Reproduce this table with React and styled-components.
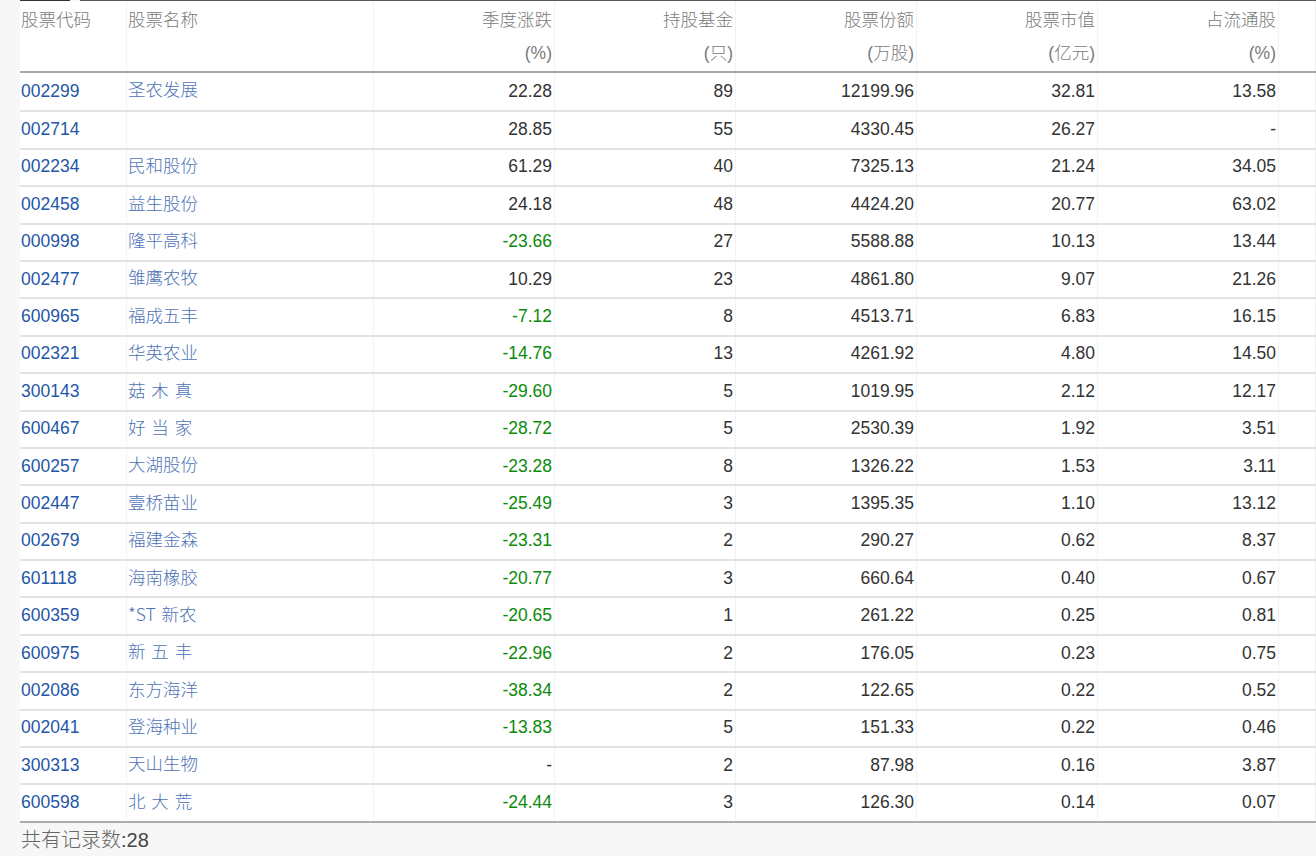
import React from "react";
import styled, { createGlobalStyle } from "styled-components";

const rows = [
  ["002299", "圣农发展", "22.28", "89", "12199.96", "32.81", "13.58"],
  ["002714", "", "28.85", "55", "4330.45", "26.27", "-"],
  ["002234", "民和股份", "61.29", "40", "7325.13", "21.24", "34.05"],
  ["002458", "益生股份", "24.18", "48", "4424.20", "20.77", "63.02"],
  ["000998", "隆平高科", "-23.66", "27", "5588.88", "10.13", "13.44"],
  ["002477", "雏鹰农牧", "10.29", "23", "4861.80", "9.07", "21.26"],
  ["600965", "福成五丰", "-7.12", "8", "4513.71", "6.83", "16.15"],
  ["002321", "华英农业", "-14.76", "13", "4261.92", "4.80", "14.50"],
  ["300143", "菇 木 真", "-29.60", "5", "1019.95", "2.12", "12.17"],
  ["600467", "好 当 家", "-28.72", "5", "2530.39", "1.92", "3.51"],
  ["600257", "大湖股份", "-23.28", "8", "1326.22", "1.53", "3.11"],
  ["002447", "壹桥苗业", "-25.49", "3", "1395.35", "1.10", "13.12"],
  ["002679", "福建金森", "-23.31", "2", "290.27", "0.62", "8.37"],
  ["601118", "海南橡胶", "-20.77", "3", "660.64", "0.40", "0.67"],
  ["600359", "*ST 新农", "-20.65", "1", "261.22", "0.25", "0.81"],
  ["600975", "新 五 丰", "-22.96", "2", "176.05", "0.23", "0.75"],
  ["002086", "东方海洋", "-38.34", "2", "122.65", "0.22", "0.52"],
  ["002041", "登海种业", "-13.83", "5", "151.33", "0.22", "0.46"],
  ["300313", "天山生物", "-", "2", "87.98", "0.16", "3.87"],
  ["600598", "北 大 荒", "-24.44", "3", "126.30", "0.14", "0.07"],
];

const headers = [
  ["股票代码", ""],
  ["股票名称", ""],
  ["季度涨跌", "(%)"],
  ["持股基金", "(只)"],
  ["股票份额", "(万股)"],
  ["股票市值", "(亿元)"],
  ["占流通股", "(%)"],
];

const GlobalStyle = createGlobalStyle`
  html, body {
    margin: 0;
    padding: 0;
    background: #f7f7f7;
    overflow: hidden;
  }
  body {
    font-family: "Liberation Sans", Arial, "Noto Sans CJK SC", sans-serif;
  }
`;

const Page = styled.div`
  padding-left: 20px;
  width: 1296px;
`;

const TopRule = styled.div`
  display: flex;
  height: 1px;
`;

const RuleSeg = styled.div`
  height: 1px;
  background: ${(p) => p.$color};
  width: ${(p) => (p.$grow ? "auto" : "50px")};
  flex: ${(p) => (p.$grow ? 1 : "none")};
  margin-left: ${(p) => (p.$grow ? "10px" : 0)};
`;

const Table = styled.div`
  background: #fff;
  border-bottom: 2px solid #acacac;
`;

const cols = "107px 247px 181px 181px 181px 181px 181px 1fr";

const HeadRow = styled.div`
  display: grid;
  grid-template-columns: ${cols};
  height: 70px;
  border-bottom: 2px solid #a8a8a8;
`;

const Row = styled.div`
  display: grid;
  grid-template-columns: ${cols};
  height: 37.4px;
  border-top: ${(p) => (p.$first ? "none" : "2px solid #e3e3e3")};
  box-sizing: border-box;
`;

const HeadCell = styled.div`
  border-right: 1px solid #f2f2f2;
  padding: 1px ${(p) => (p.$right ? "2px" : "0")} 0 1px;
  text-align: ${(p) => (p.$right ? "right" : "left")};
  color: #7a7a7a;
  font-size: 17.5px;
  line-height: 34px;
  font-family: "Noto Sans CJK SC", "Liberation Sans", sans-serif;
  font-weight: 300;
  white-space: nowrap;
`;

const Unit = styled.div`
  font-family: "Liberation Sans", "Noto Sans CJK SC", sans-serif;
`;

const Cell = styled.div`
  border-right: 1px solid #f2f2f2;
  display: flex;
  align-items: center;
  justify-content: ${(p) => (p.$right ? "flex-end" : "flex-start")};
  padding: 0 ${(p) => (p.$right ? "2px" : "0")} 1px 1px;
  font-size: 17.5px;
  color: ${(p) => p.$color || "#333"};
  white-space: nowrap;
`;

const CodeLink = styled.span`
  color: #2356a8;
`;

const NameLink = styled.span`
  display: block;
  line-height: 1;
  margin-bottom: 4px;
  color: #4d73b6;
  font-family: "Noto Sans CJK SC", "Liberation Sans", sans-serif;
  font-weight: 300;
  word-spacing: 2px;
`;

const Footer = styled.div`
  font-size: 20px;
  line-height: 32px;
  color: #444;
  padding-left: 1px;
`;

const FooterLabel = styled.span`
  color: #666;
  font-family: "Noto Sans CJK SC", sans-serif;
  font-weight: 300;
`;

const changeColor = (v) => (v.startsWith("-") && v !== "-" ? "#0b8a0b" : "#333");

export default function App() {
  return (
    <>
      <GlobalStyle />
      <Page>
        <TopRule>
          <RuleSeg $color="#333" />
          <RuleSeg $color="#5a5a5a" $grow />
        </TopRule>
        <Table>
          <HeadRow>
            {headers.map(([title, unit], i) => (
              <HeadCell key={title} $right={i > 1}>
                <div>{title}</div>
                {unit && <Unit>{unit}</Unit>}
              </HeadCell>
            ))}
            <HeadCell />
          </HeadRow>
          {rows.map((r, idx) => (
            <Row key={r[0]} $first={idx === 0}>
              <Cell>
                <CodeLink>{r[0]}</CodeLink>
              </Cell>
              <Cell>
                <NameLink>{r[1]}</NameLink>
              </Cell>
              <Cell $right $color={changeColor(r[2])}>
                {r[2]}
              </Cell>
              <Cell $right>{r[3]}</Cell>
              <Cell $right>{r[4]}</Cell>
              <Cell $right>{r[5]}</Cell>
              <Cell $right>{r[6]}</Cell>
              <Cell />
            </Row>
          ))}
        </Table>
        <Footer>
          <FooterLabel>共有记录数</FooterLabel>:28
        </Footer>
      </Page>
    </>
  );
}
